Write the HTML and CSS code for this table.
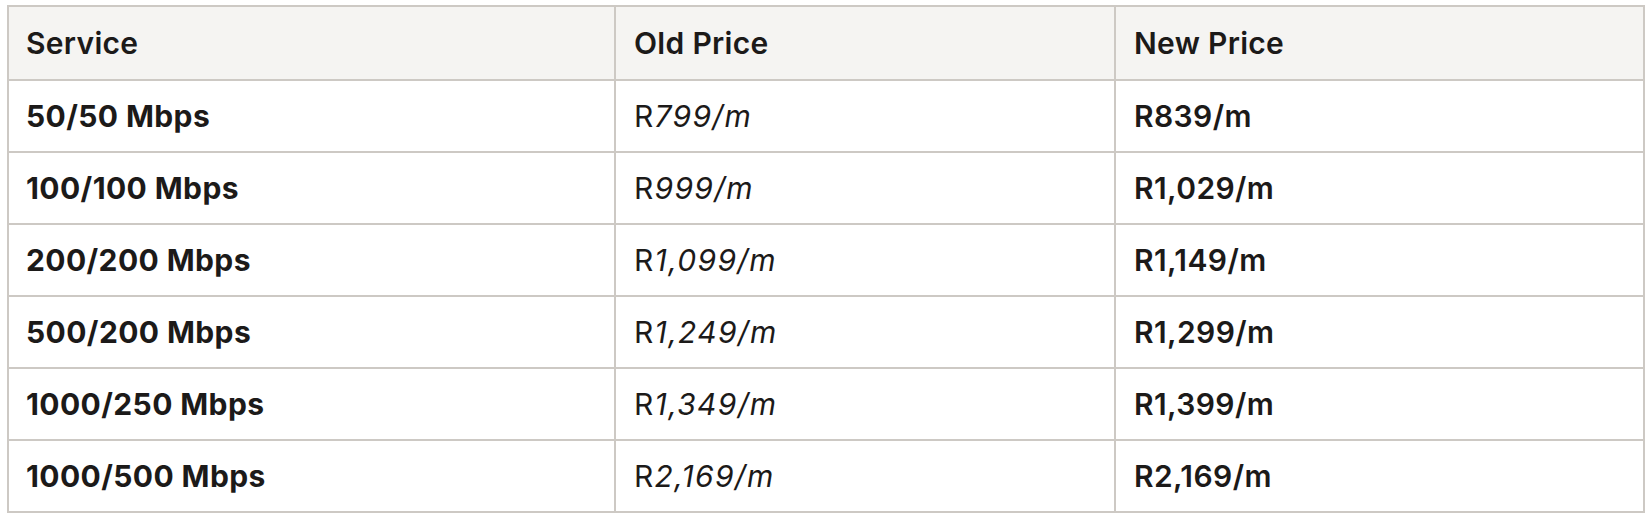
FILE: index.html
```html
<!DOCTYPE html>
<html lang="en">
<head>
<meta charset="utf-8">
<title>Price table</title>
<link rel="stylesheet" href="styles.css">
</head>
<body>
<div class="wrap">
  <table class="prices">
    <colgroup>
      <col class="c1">
      <col class="c2">
      <col class="c3">
    </colgroup>
    <thead>
      <tr><th>Service</th><th>Old Price</th><th>New Price</th></tr>
    </thead>
    <tbody>
      <tr><td class="svc">50/50 Mbps</td><td class="old">R<em>799/m</em></td><td class="new">R839/m</td></tr>
      <tr><td class="svc">100/100 Mbps</td><td class="old">R<em>999/m</em></td><td class="new">R1,029/m</td></tr>
      <tr><td class="svc">200/200 Mbps</td><td class="old">R<em>1,099/m</em></td><td class="new">R1,149/m</td></tr>
      <tr><td class="svc">500/200 Mbps</td><td class="old">R<em>1,249/m</em></td><td class="new">R1,299/m</td></tr>
      <tr><td class="svc">1000/250 Mbps</td><td class="old">R<em>1,349/m</em></td><td class="new">R1,399/m</td></tr>
      <tr><td class="svc">1000/500 Mbps</td><td class="old">R<em>2,169/m</em></td><td class="new">R2,169/m</td></tr>
    </tbody>
  </table>
</div>
</body>
</html>
```
FILE: styles.css
```css
html, body {
  margin: 0;
  padding: 0;
  background: #ffffff;
}
.wrap {
  padding: 5px 7px 5px 7px;
}
.prices {
  width: 100%;
  border-collapse: collapse;
  table-layout: fixed;
  font-family: Inter, "Noto Sans", sans-serif;
  font-size: 30px;
  color: #1c1a19;
  border: 2px solid #cdc9c4;
}
.c1 { width: 607px; }
.c2 { width: 500px; }
.c3 { width: auto; }
.prices th,
.prices td {
  border: 2px solid #cdc9c4;
  padding: 0 17px 0 17px;
  text-align: left;
  vertical-align: middle;
  white-space: nowrap;
  line-height: 1;
}
.prices th:not(:first-child),
.prices td:not(:first-child) {
  padding-left: 18px;
}
.prices thead tr { height: 74px; }
.prices tbody tr { height: 72px; }
.prices th {
  background: #f5f4f2;
  font-weight: 600;
  letter-spacing: 0.3px;
}
.svc {
  font-weight: 700;
  letter-spacing: 0.4px;
}
.old {
  font-weight: 400;
  letter-spacing: 1.3px;
}
.old em {
  font-style: italic;
}
.new {
  font-weight: 600;
  letter-spacing: 0.4px;
}
```
